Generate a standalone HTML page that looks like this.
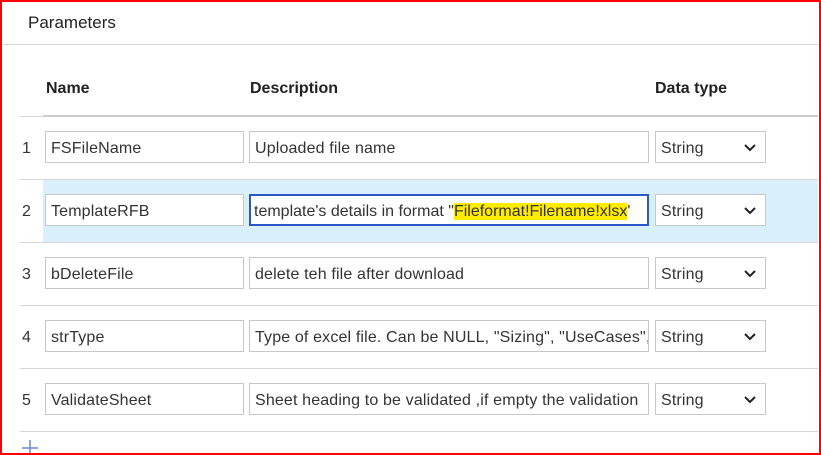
<!DOCTYPE html>
<html><head><style>
body{margin:0;width:821px;height:455px;overflow:hidden;background:#fff;font-family:"Liberation Sans",sans-serif;color:#333;position:relative}
.frame{position:absolute;left:0;top:0;width:817px;height:451px;border:2px solid #f00;border-right-width:3px;border-bottom-width:2px}
.a{position:absolute}
.inp{position:absolute;border:1px solid #c8c8c8;background:#fff;font-size:16px;line-height:33px;padding-left:5px;box-sizing:border-box;height:32px;white-space:nowrap;overflow:hidden;letter-spacing:0.15px}
.hl{position:absolute;height:1px;background:#d6d6d6}
.num{position:absolute;left:22px;font-size:16px}
.chev{position:absolute;right:9px;top:12px}
</style></head><body>
<div class="a" style="left:28px;top:13px;font-size:17px;color:#222">Parameters</div>
<div class="hl" style="left:3px;top:44px;width:815px"></div>
<div class="a" style="left:46px;top:80px;font-size:16px;font-weight:bold;color:#222">Name</div>
<div class="a" style="left:250px;top:80px;font-size:16px;font-weight:bold;color:#222">Description</div>
<div class="a" style="left:655px;top:80px;font-size:16px;font-weight:bold;color:#222">Data type</div>
<div class="hl" style="left:20px;top:116px;width:23px"></div>
<div class="hl" style="left:43px;top:115px;width:775px;height:2px;background:#ccc"></div>
<div class="a" style="left:43px;top:180px;width:775px;height:62px;background:#d9eff9"></div>
<div class="hl" style="left:20px;top:179px;width:798px"></div>
<div class="hl" style="left:20px;top:242px;width:798px"></div>
<div class="hl" style="left:20px;top:305px;width:798px"></div>
<div class="hl" style="left:20px;top:368px;width:798px"></div>
<div class="hl" style="left:20px;top:431px;width:798px"></div>

<div class="num" style="top:140px">1</div>
<div class="inp" style="left:45px;top:131px;width:199px">FSFileName</div>
<div class="inp" style="left:249px;top:131px;width:400px">Uploaded file name</div>
<div class="inp" style="left:655px;top:131px;width:111px">String<svg class="chev" width="12" height="8"><path d="M1 1l5 5 5-5" stroke="#222" stroke-width="2" fill="none"/></svg></div>

<div class="num" style="top:203px">2</div>
<div class="inp" style="left:45px;top:194px;width:199px">TemplateRFB</div>
<div class="inp" style="left:249px;top:194px;width:400px;border:2px solid #2f56c8;line-height:31px;padding-left:3px;letter-spacing:0">template's details in format "<span style="background:#ffeb00">Fileformat!Filename!xlsx</span>'</div>
<div class="inp" style="left:655px;top:194px;width:111px">String<svg class="chev" width="12" height="8"><path d="M1 1l5 5 5-5" stroke="#222" stroke-width="2" fill="none"/></svg></div>

<div class="num" style="top:266px">3</div>
<div class="inp" style="left:45px;top:257px;width:199px">bDeleteFile</div>
<div class="inp" style="left:249px;top:257px;width:400px">delete teh file after download</div>
<div class="inp" style="left:655px;top:257px;width:111px">String<svg class="chev" width="12" height="8"><path d="M1 1l5 5 5-5" stroke="#222" stroke-width="2" fill="none"/></svg></div>

<div class="num" style="top:329px">4</div>
<div class="inp" style="left:45px;top:320px;width:199px">strType</div>
<div class="inp" style="left:249px;top:320px;width:400px">Type of excel file. Can be NULL, "Sizing", "UseCases", e</div>
<div class="inp" style="left:655px;top:320px;width:111px">String<svg class="chev" width="12" height="8"><path d="M1 1l5 5 5-5" stroke="#222" stroke-width="2" fill="none"/></svg></div>

<div class="num" style="top:392px">5</div>
<div class="inp" style="left:45px;top:383px;width:199px">ValidateSheet</div>
<div class="inp" style="left:249px;top:383px;width:400px">Sheet heading to be validated ,if empty the validation</div>
<div class="inp" style="left:655px;top:383px;width:111px">String<svg class="chev" width="12" height="8"><path d="M1 1l5 5 5-5" stroke="#222" stroke-width="2" fill="none"/></svg></div>

<svg class="a" style="left:21px;top:440px" width="18" height="15"><path d="M9 0v15M1 8h16" stroke="#6f86d6" stroke-width="1.5"/></svg>
<div class="frame"></div>
</body></html>
